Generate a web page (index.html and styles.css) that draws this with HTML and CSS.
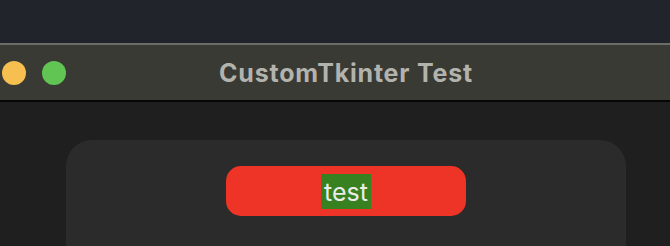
FILE: index.html
```html
<!DOCTYPE html>
<html>
<head>
<meta charset="utf-8">
<link rel="stylesheet" href="styles.css">
</head>
<body>
<div class="desktop"></div>
<div class="window">
  <div class="titlebar">
    <div class="lights">
      <span class="light yellow"></span>
      <span class="light green"></span>
    </div>
    <div class="title">CustomTkinter Test</div>
  </div>
  <div class="content">
    <div class="frame">
      <div class="button"><span class="label">test</span></div>
    </div>
  </div>
</div>
</body>
</html>
```
FILE: styles.css
```css
html, body {
  margin: 0;
  padding: 0;
}
body {
  width: 670px;
  height: 246px;
  overflow: hidden;
  background: #1f1f1f;
  font-family: Inter, "Liberation Sans", sans-serif;
}
.desktop {
  height: 43px;
  background: #21242b;
}
.titlebar {
  height: 55px;
  border-top: 2px solid #6b6b67;
  border-bottom: 2px solid #060606;
  background: #3a3a35;
  display: flex;
  align-items: center;
}
.lights {
  display: flex;
  gap: 16px;
  padding-left: 2px;
}
.light {
  width: 24px;
  height: 24px;
  border-radius: 50%;
  display: block;
}
.yellow { background: #f6bf50; }
.green { background: #61c554; }
.title {
  flex: 1;
  padding-right: 44px;
  text-align: center;
  color: #b3b3ad;
  font-weight: 700;
  font-size: 25px;
  letter-spacing: 0.8px;
}
.content {
  padding: 38px 44px 0 66px;
}
.frame {
  height: 80px;
  background: #2b2b2b;
  border-radius: 26px 26px 0 0;
  display: flex;
  justify-content: center;
  padding-top: 26px;
}
.button {
  width: 240px;
  height: 50px;
  border-radius: 15px;
  background: #ee3426;
  display: flex;
  align-items: center;
  justify-content: center;
}
.label {
  background: #388121;
  color: #e9ece8;
  font-size: 25px;
  height: 35px;
  line-height: 37px;
  padding: 0 3px;
}
```
